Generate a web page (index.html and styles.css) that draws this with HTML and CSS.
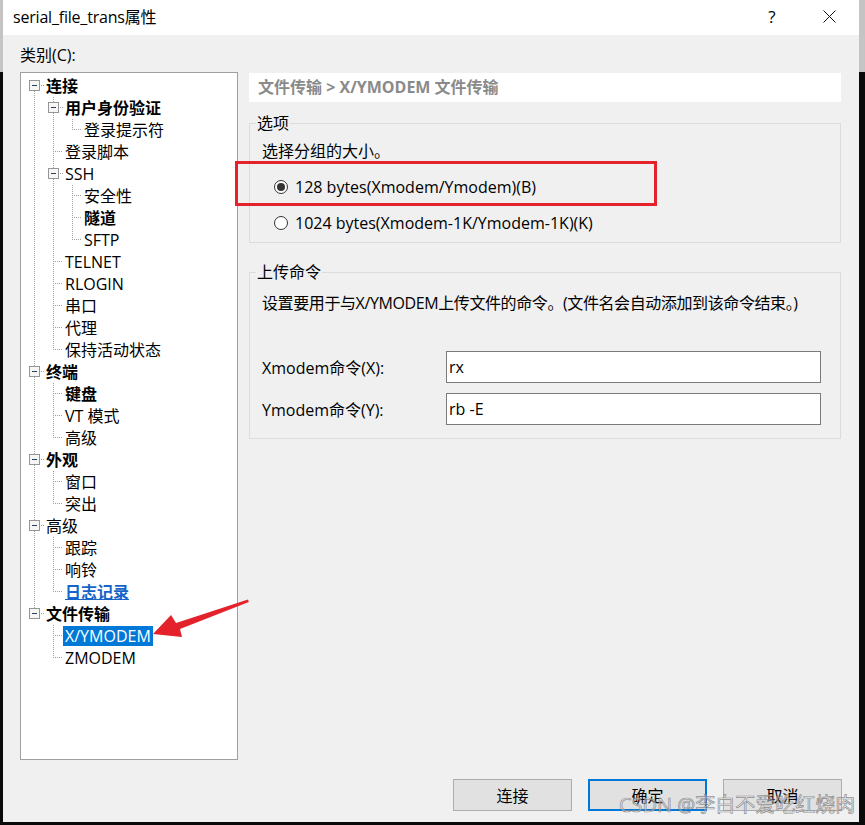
FILE: index.html
```html
<!DOCTYPE html>
<html lang="zh-CN">
<head>
<meta charset="utf-8">
<title>serial_file_trans属性</title>
<link rel="stylesheet" href="styles.css">
</head>
<body>
<svg class="defs" width="0" height="0" aria-hidden="true">
  <defs>
    <g id="v"><line x1="9.5" y1="0" x2="9.5" y2="22" class="dot"/></g>
    <g id="up"><line x1="9.5" y1="0" x2="9.5" y2="11" class="dot"/></g>
    <g id="rt"><line x1="11" y1="10.5" x2="19" y2="10.5" class="dot"/></g>
    <g id="bx">
      <rect x="4.5" y="5.5" width="10" height="10" class="box"/>
      <line x1="7" y1="10.5" x2="12" y2="10.5" class="minus"/>
      <line x1="16" y1="10.5" x2="19" y2="10.5" class="dot"/>
    </g>
    <g id="bup"><line x1="9.5" y1="0" x2="9.5" y2="5" class="dot"/></g>
    <g id="bdn"><line x1="9.5" y1="16" x2="9.5" y2="22" class="dot"/></g>
  </defs>
</svg>
<div class="dialog">
  <div class="titlebar">
    <span class="title">serial_file_trans属性</span>
    <span class="help">?</span>
    <span class="close"><svg width="13" height="13" viewBox="0 0 13 13"><path d="M0.5 0.5 L12.5 12.5 M12.5 0.5 L0.5 12.5" stroke="#111" stroke-width="1" fill="none"/></svg></span>
  </div>
  <div class="content">
    <div class="main">
      <div class="left">
        <div class="cat-label">类别(C):</div>
        <div class="tree">
          <div class="row"><svg class="c"><use href="#bx"/><use href="#bdn"/></svg><span class="lbl b">连接</span></div>
          <div class="row"><svg class="c"><use href="#v"/></svg><svg class="c"><use href="#bx"/><use href="#bup"/><use href="#bdn"/></svg><span class="lbl b">用户身份验证</span></div>
          <div class="row"><svg class="c"><use href="#v"/></svg><svg class="c"><use href="#v"/></svg><svg class="c"><use href="#up"/><use href="#rt"/></svg><span class="lbl">登录提示符</span></div>
          <div class="row"><svg class="c"><use href="#v"/></svg><svg class="c"><use href="#v"/><use href="#rt"/></svg><span class="lbl">登录脚本</span></div>
          <div class="row"><svg class="c"><use href="#v"/></svg><svg class="c"><use href="#bx"/><use href="#bup"/><use href="#bdn"/></svg><span class="lbl">SSH</span></div>
          <div class="row"><svg class="c"><use href="#v"/></svg><svg class="c"><use href="#v"/></svg><svg class="c"><use href="#v"/><use href="#rt"/></svg><span class="lbl">安全性</span></div>
          <div class="row"><svg class="c"><use href="#v"/></svg><svg class="c"><use href="#v"/></svg><svg class="c"><use href="#v"/><use href="#rt"/></svg><span class="lbl b">隧道</span></div>
          <div class="row"><svg class="c"><use href="#v"/></svg><svg class="c"><use href="#v"/></svg><svg class="c"><use href="#up"/><use href="#rt"/></svg><span class="lbl">SFTP</span></div>
          <div class="row"><svg class="c"><use href="#v"/></svg><svg class="c"><use href="#v"/><use href="#rt"/></svg><span class="lbl">TELNET</span></div>
          <div class="row"><svg class="c"><use href="#v"/></svg><svg class="c"><use href="#v"/><use href="#rt"/></svg><span class="lbl">RLOGIN</span></div>
          <div class="row"><svg class="c"><use href="#v"/></svg><svg class="c"><use href="#v"/><use href="#rt"/></svg><span class="lbl">串口</span></div>
          <div class="row"><svg class="c"><use href="#v"/></svg><svg class="c"><use href="#v"/><use href="#rt"/></svg><span class="lbl">代理</span></div>
          <div class="row"><svg class="c"><use href="#v"/></svg><svg class="c"><use href="#up"/><use href="#rt"/></svg><span class="lbl">保持活动状态</span></div>
          <div class="row"><svg class="c"><use href="#bx"/><use href="#bup"/><use href="#bdn"/></svg><span class="lbl b">终端</span></div>
          <div class="row"><svg class="c"><use href="#v"/></svg><svg class="c"><use href="#v"/><use href="#rt"/></svg><span class="lbl b">键盘</span></div>
          <div class="row"><svg class="c"><use href="#v"/></svg><svg class="c"><use href="#v"/><use href="#rt"/></svg><span class="lbl">VT 模式</span></div>
          <div class="row"><svg class="c"><use href="#v"/></svg><svg class="c"><use href="#up"/><use href="#rt"/></svg><span class="lbl">高级</span></div>
          <div class="row"><svg class="c"><use href="#bx"/><use href="#bup"/><use href="#bdn"/></svg><span class="lbl b">外观</span></div>
          <div class="row"><svg class="c"><use href="#v"/></svg><svg class="c"><use href="#v"/><use href="#rt"/></svg><span class="lbl">窗口</span></div>
          <div class="row"><svg class="c"><use href="#v"/></svg><svg class="c"><use href="#up"/><use href="#rt"/></svg><span class="lbl">突出</span></div>
          <div class="row"><svg class="c"><use href="#bx"/><use href="#bup"/><use href="#bdn"/></svg><span class="lbl">高级</span></div>
          <div class="row"><svg class="c"><use href="#v"/></svg><svg class="c"><use href="#v"/><use href="#rt"/></svg><span class="lbl">跟踪</span></div>
          <div class="row"><svg class="c"><use href="#v"/></svg><svg class="c"><use href="#v"/><use href="#rt"/></svg><span class="lbl">响铃</span></div>
          <div class="row"><svg class="c"><use href="#v"/></svg><svg class="c"><use href="#up"/><use href="#rt"/></svg><span class="lbl link">日志记录</span></div>
          <div class="row"><svg class="c"><use href="#bx"/><use href="#bup"/></svg><span class="lbl b">文件传输</span></div>
          <div class="row"><svg class="c"></svg><svg class="c"><use href="#v"/><use href="#rt"/></svg><span class="lbl sel">X/YMODEM</span></div>
          <div class="row"><svg class="c"></svg><svg class="c"><use href="#up"/><use href="#rt"/></svg><span class="lbl">ZMODEM</span></div>
        </div>
      </div>
      <div class="right">
        <div class="crumb">文件传输 &gt; X/YMODEM 文件传输</div>
        <fieldset class="group g1">
          <legend>选项</legend>
          <div class="note">选择分组的大小。</div>
          <div class="radio-row"><span class="radio on"></span><span>128 bytes(Xmodem/Ymodem)(B)</span></div>
          <div class="radio-row"><span class="radio"></span><span>1024 bytes(Xmodem-1K/Ymodem-1K)(K)</span></div>
        </fieldset>
        <fieldset class="group g2">
          <legend>上传命令</legend>
          <div class="desc">设置要用于与X/YMODEM上传文件的命令。(文件名会自动添加到该命令结束。)</div>
          <div class="field first"><span class="flabel">Xmodem命令(X):</span><input class="finput" type="text" value="rx"></div>
          <div class="field"><span class="flabel">Ymodem命令(Y):</span><input class="finput" type="text" value="rb -E"></div>
        </fieldset>
      </div>
    </div>
    <div class="buttons">
      <button class="btn">连接</button>
      <button class="btn default">确定</button>
      <button class="btn">取消</button>
    </div>
  </div>
  <div class="redbox"></div>
  <svg class="arrow" width="110" height="65" viewBox="0 0 110 65"><polygon points="100,9.5 100.8,12 32,39 34,47 5,44 23,25 28,33" fill="#e3222b"/></svg>
  <div class="watermark">CSDN @李白不爱吃红烧肉</div>
</div>
</body>
</html>
```
FILE: styles.css
```css
html, body {
  margin: 0;
  padding: 0;
}
body {
  width: 865px;
  height: 825px;
  overflow: hidden;
  background: linear-gradient(#c4c4c4 0, #c4c4c4 72px, #0a0a0a 72px);
  font-family: "Open Sans", "Noto Sans CJK SC", sans-serif;
  font-size: 16px;
  color: #000;
}
.defs {
  display: block;
  width: 0;
  height: 0;
}
.dot {
  stroke: #a0a0a0;
  stroke-width: 1;
  stroke-dasharray: 1 1;
  shape-rendering: crispEdges;
}
.box {
  fill: #f6f6f6;
  stroke: #959595;
  stroke-width: 1;
  shape-rendering: crispEdges;
}
.minus {
  stroke: #27405e;
  stroke-width: 1;
  shape-rendering: crispEdges;
}
.dialog {
  position: relative;
  margin-left: 3px;
  width: 856px;
  height: 822px;
  background: #f0f0f0;
  display: flex;
  flex-direction: column;
}
.titlebar {
  height: 35px;
  box-sizing: border-box;
  padding-bottom: 3px;
  flex: none;
  background: #fff;
  display: flex;
  align-items: center;
}
.title {
  flex: 1;
  padding-left: 10px;
  font-size: 16px;
  letter-spacing: -0.2px;
}
.help {
  width: 30px;
  text-align: center;
  margin-right: 27px;
  font-size: 17px;
}
.close {
  width: 30px;
  margin-right: 15px;
  display: flex;
  justify-content: center;
}
.close svg {
  display: block;
}
.content {
  flex: 1;
  padding: 10px 17px 0 17px;
  display: flex;
  flex-direction: column;
}
.main {
  display: flex;
  gap: 11px;
}
.left {
  width: 218px;
  flex: none;
}
.cat-label {
  height: 20px;
  line-height: 20px;
  margin-bottom: 7px;
}
.tree {
  height: 688px;
  box-sizing: border-box;
  border: 1px solid #a0a0a0;
  background: #fff;
  padding: 2px 0 0 4px;
}
.row {
  display: flex;
  align-items: center;
  height: 22px;
}
.c {
  width: 19px;
  height: 22px;
  flex: none;
  display: block;
}
.lbl {
  padding: 0 2px;
  line-height: 20px;
  white-space: nowrap;
}
.lbl.b {
  font-weight: bold;
}
.lbl.link {
  color: #1763c8;
  font-weight: bold;
  text-decoration: underline;
}
.lbl.sel {
  background: #0078d7;
  color: #fff;
}
.right {
  flex: 1;
  padding-top: 28px;
  margin-right: 1px;
}
.crumb {
  height: 29px;
  line-height: 29px;
  background: #fff;
  padding-left: 9px;
  font-weight: bold;
  color: #8a8a8a;
}
.group {
  margin: 11px 0 0;
  border: 1px solid #dcdcdc;
  padding: 0 19px 9px 12px;
  min-width: 0;
}
.group legend {
  padding: 0 1px;
  margin-left: -6px;
  line-height: 20px;
}
.g2 {
  margin-top: 19px;
  padding-bottom: 13px;
}
.note {
  margin-top: 8px;
  line-height: 20px;
}
.radio-row {
  display: flex;
  align-items: center;
  gap: 7px;
  height: 20px;
  margin-top: 16px;
  padding-left: 12px;
}
.radio {
  width: 14px;
  height: 14px;
  box-sizing: border-box;
  border: 1px solid #333;
  border-radius: 50%;
  background: #fff;
  display: flex;
  align-items: center;
  justify-content: center;
}
.radio.on::after {
  content: "";
  width: 8px;
  height: 8px;
  border-radius: 50%;
  background: #333;
}
.desc {
  margin-top: 11px;
  line-height: 20px;
  letter-spacing: -0.4px;
}
.field {
  display: flex;
  align-items: center;
  height: 32px;
  margin-top: 10px;
}
.field.first {
  margin-top: 38px;
}
.flabel {
  width: 184px;
  flex: none;
}
.finput {
  flex: 1;
  min-width: 0;
  height: 32px;
  box-sizing: border-box;
  border: 1px solid #7a7a7a;
  background: #fff;
  padding: 0 2px;
  margin: 0;
  font: inherit;
  color: #000;
  outline: none;
}
.buttons {
  display: flex;
  justify-content: flex-end;
  gap: 16px;
  margin-top: 19px;
}
.btn {
  width: 119px;
  height: 32px;
  box-sizing: border-box;
  border: 1px solid #adadad;
  background: #e1e1e1;
  font: inherit;
  color: #000;
  padding: 0;
  margin: 0;
}
.btn.default {
  border: 2px solid #0078d7;
}
.redbox {
  position: absolute;
  left: 232px;
  top: 161px;
  width: 422px;
  height: 45px;
  box-sizing: border-box;
  border: 3px solid #e3222b;
}
.arrow {
  position: absolute;
  left: 145px;
  top: 590px;
}
.watermark {
  position: absolute;
  left: 616px;
  top: 792px;
  font-size: 20px;
  line-height: 26px;
  color: rgba(235, 235, 235, 0.55);
  -webkit-text-stroke: 0.7px rgba(110, 110, 110, 0.75);
  white-space: nowrap;
}
```
